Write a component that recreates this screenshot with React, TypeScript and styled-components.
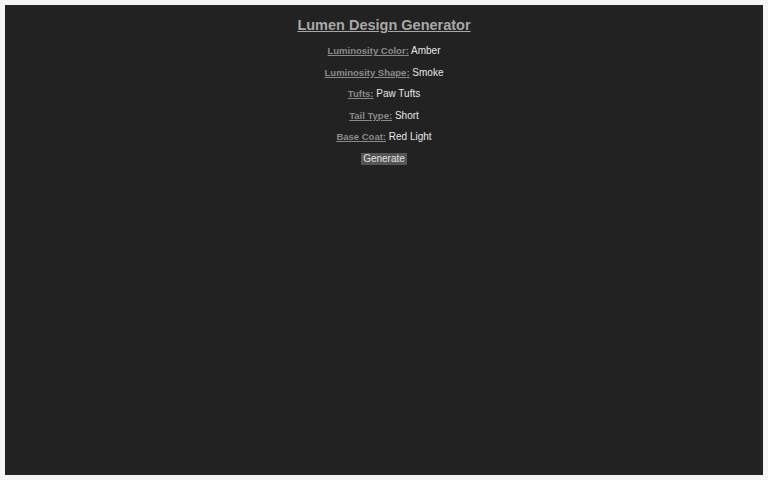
import styled, { createGlobalStyle } from 'styled-components';

const GlobalStyle = createGlobalStyle`
    html, body {
        margin: 0;
        padding: 0;
        background: #f4f4f4;
    }
    body {
        padding: 5px;
        font-family: "Liberation Sans", Arial, sans-serif;
    }
`;

const traits = [
    { label: 'Luminosity Color', value: 'Amber' },
    { label: 'Luminosity Shape', value: 'Smoke' },
    { label: 'Tufts', value: 'Paw Tufts' },
    { label: 'Tail Type', value: 'Short' },
    { label: 'Base Coat', value: 'Red Light' },
];

const App = () => {
    return (
        <>
            <GlobalStyle />
            <Panel>
                <Title>Lumen Design Generator</Title>
                <TraitList>
                    {traits.map(t => (
                        <TraitRow key={t.label}>
                            <TraitLabel>{t.label}:</TraitLabel> {t.value}
                        </TraitRow>
                    ))}
                </TraitList>
                <GenerateButton>Generate</GenerateButton>
            </Panel>
        </>
    )
}

export default App

const Panel = styled.div`
    height: 470px;
    box-sizing: border-box;
    background-color: #222222;
    display: flex;
    flex-direction: column;
    align-items: center;
    padding-top: 12px;
`;

const Title = styled.h1`
    margin: 0 0 12px 0;
    font-size: 14.5px;
    font-weight: bold;
    color: #a8a8a8;
    text-decoration: underline;
`;

const TraitList = styled.div`
    display: flex;
    flex-direction: column;
    align-items: center;
    gap: 9.5px;
`;

const TraitRow = styled.p`
    margin: 0;
    font-size: 10px;
    line-height: 12px;
    color: #e6e6e6;
`;

const TraitLabel = styled.span`
    font-size: 9.5px;
    font-weight: bold;
    color: #8a8a8a;
    text-decoration: underline;
`;

const GenerateButton = styled.button`
    margin-top: 9.5px;
    padding: 0 2.5px;
    border: none;
    border-radius: 0;
    background-color: #555555;
    color: #e0e0e0;
    font-family: "Liberation Sans", Arial, sans-serif;
    font-size: 10px;
    line-height: 12px;
`;
